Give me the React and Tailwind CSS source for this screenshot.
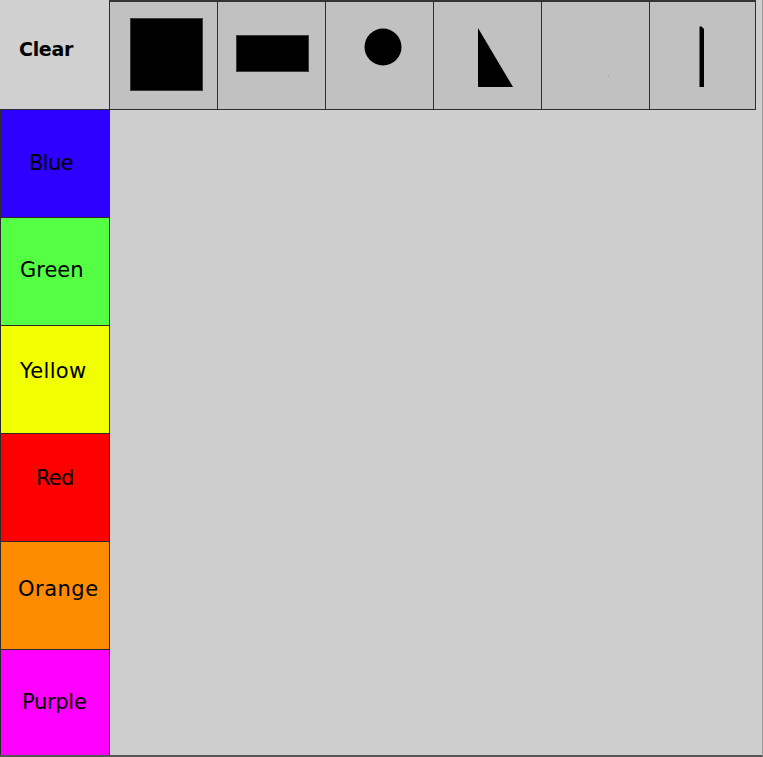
import React from "react";

const colors = [
  { name: "Blue", bg: "bg-[#2d00ff]", cls: "pl-[28px] pt-[43px] tracking-[-0.6px]" },
  { name: "Green", bg: "bg-[#55ff44]", cls: "pl-[19px] pt-[42px]" },
  { name: "Yellow", bg: "bg-[#f2ff00]", cls: "pl-[19px] pt-[35px] tracking-[0.3px]" },
  { name: "Red", bg: "bg-[#ff0000]", cls: "pl-[35px] pt-[34px] tracking-[-0.8px]" },
  { name: "Orange", bg: "bg-[#ff8c00]", cls: "pl-[17px] pt-[37px] tracking-[0.5px]" },
  { name: "Purple", bg: "bg-[#ff00ff]", cls: "pl-[21px] pt-[42px] tracking-[-0.3px]" },
];

function ToolButton({ width, children }) {
  return (
    <button
      className={`${width} h-full border-l border-[#2e2e2e] bg-[#c1c1c1] p-0 block`}
    >
      <svg width="100%" height="100%" className="block">
        {children}
      </svg>
    </button>
  );
}

export default function App() {
  return (
    <div className="w-[763px] h-[757px] bg-[#cecece] flex flex-col overflow-hidden border-r border-r-[#9c9c9c] border-b-2 border-b-[#555555] font-['DejaVu_Sans',sans-serif] text-black">
      {/* top row */}
      <div className="flex h-[110px] shrink-0">
        <button className="w-[109px] h-[110px] shrink-0 bg-[#d0d0d0] border-b border-[#2e2e2e] text-left pl-[19px] pt-[40px] text-[19px] leading-none font-bold tracking-[-0.3px] flex items-start">
          Clear
        </button>
        <div className="flex h-[110px] border-t-2 border-b border-r border-t-[#333333] border-b-[#2e2e2e] border-r-[#2e2e2e]">
          <ToolButton width="w-[108px]">
            <rect x="20.5" y="16.5" width="72" height="72" fill="#000" stroke="#3a3a3a" strokeWidth="1" />
          </ToolButton>
          <ToolButton width="w-[108px]">
            <rect x="18.5" y="33.5" width="72" height="36" fill="#000" stroke="#3a3a3a" strokeWidth="1" />
          </ToolButton>
          <ToolButton width="w-[108px]">
            <circle cx="57" cy="45" r="18.5" fill="#000" />
          </ToolButton>
          <ToolButton width="w-[108px]">
            <polygon points="44,26 44,85 79,85" fill="#000" />
          </ToolButton>
          <ToolButton width="w-[108px]">
            <rect x="66" y="74" width="1" height="1" fill="#9a9a9a" />
          </ToolButton>
          <ToolButton width="w-[106px]">
            <path d="M49.5 25 Q50.5 24 51.5 24.5 L54 27 L54 84.5 Q54 85 53.5 85 L50 85 Q49.5 85 49.5 84.5 Z" fill="#000" />
          </ToolButton>
        </div>
        <div className="flex-1" />
      </div>

      {/* bottom part */}
      <div className="flex flex-1 min-h-0">
        <div className="w-[110px] shrink-0 flex flex-col">
          {colors.map((c, i) => (
            <button
              key={c.name}
              className={`${c.bg} ${c.cls} w-[110px] ${
                i === colors.length - 1 ? "flex-1" : "h-[108px] shrink-0 border-b"
              } border-l border-r border-[#2a2a2a] text-left text-[21px] leading-none flex items-start`}
            >
              {c.name}
            </button>
          ))}
        </div>
        <div className="flex-1" />
      </div>
    </div>
  );
}
